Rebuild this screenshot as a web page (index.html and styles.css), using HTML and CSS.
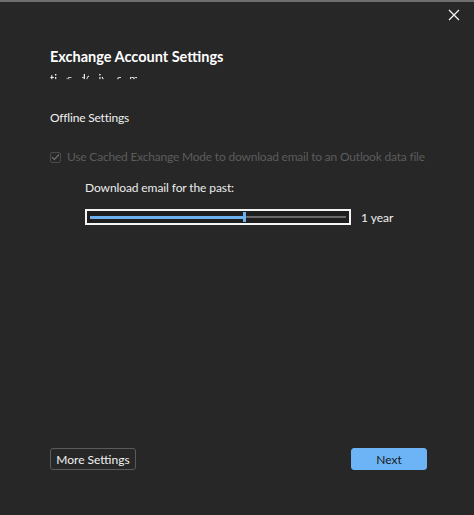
FILE: index.html
```html
<!DOCTYPE html>
<html>
<head>
<meta charset="utf-8">
<link rel="stylesheet" href="styles.css">
</head>
<body>
<div class="dialog">
  <div class="topline"></div>
  <div class="titlebar">
    <svg class="close" width="12" height="12" viewBox="0 0 12 12"><path d="M1 1 L11 11 M11 1 L1 11" stroke="#f2f2f2" stroke-width="1.3" fill="none"/></svg>
  </div>
  <div class="content">
    <h1 class="title">Exchange Account Settings</h1>
    <div class="email">tjmsnd@live.com</div>
    <div class="section">Offline Settings</div>
    <div class="check-row">
      <span class="checkbox"><svg width="9" height="8" viewBox="0 0 9 8"><path d="M1 4.2 L3.4 6.5 L8 1.5" stroke="#707070" stroke-width="1.2" fill="none"/></svg></span>
      <span class="check-label">Use Cached Exchange Mode to download email to an Outlook data file</span>
    </div>
    <div class="download">
      <div class="dl-label">Download email for the past:</div>
      <div class="slider-row">
        <div class="slider">
          <div class="track">
            <div class="fill" style="width: 60%"></div>
            <div class="thumb" style="left: 60%"></div>
          </div>
        </div>
        <span class="value">1 year</span>
      </div>
    </div>
  </div>
  <div class="footer">
    <button class="btn secondary">More Settings</button>
    <button class="btn primary">Next</button>
  </div>
</div>
</body>
</html>
```
FILE: styles.css
```css
html, body {
  margin: 0;
  padding: 0;
  background: #272727;
}
body {
  font-family: "Lato", "Noto Sans", sans-serif;
  color: #f0f0f0;
}
.dialog {
  width: 474px;
  height: 515px;
  display: flex;
  flex-direction: column;
  box-sizing: border-box;
}
.topline {
  height: 2px;
  background: #6e6e6e;
}
.titlebar {
  height: 34px;
  display: flex;
  justify-content: flex-end;
  align-items: flex-start;
}
.close {
  margin-top: 7px;
  margin-right: 14px;
}
.content {
  padding-left: 50px;
  flex: 1;
}
.title {
  margin: 11px 0 0 0;
  font-size: 14.5px;
  font-weight: 700;
  line-height: 20px;
  color: #ffffff;
}
.email {
  display: inline-block;
  margin-top: 2px;
  font-size: 12px;
  line-height: 14px;
  color: #ffffff;
  -webkit-mask-image: linear-gradient(to bottom, #000 0, #000 45%, transparent 55%), repeating-linear-gradient(to right, #000 0, #000 7px, transparent 7px, transparent 16px);
  -webkit-mask-composite: source-in;
  mask-image: linear-gradient(to bottom, #000 0, #000 45%, transparent 55%), repeating-linear-gradient(to right, #000 0, #000 7px, transparent 7px, transparent 16px);
  mask-composite: intersect;
}
.section {
  margin-top: 24px;
  font-size: 12px;
  letter-spacing: -0.2px;
  line-height: 16px;
  color: #f0f0f0;
}
.check-row {
  margin-top: 23px;
  display: flex;
  align-items: center;
  gap: 6px;
}
.checkbox {
  width: 11px;
  height: 11px;
  border: 1px solid #4a4a4a;
  border-radius: 2px;
  box-sizing: border-box;
  display: flex;
  align-items: center;
  justify-content: center;
}
.check-label {
  font-size: 12px;
  letter-spacing: -0.2px;
  line-height: 16px;
  color: #5c5c5c;
}
.download {
  padding-left: 35px;
}
.dl-label {
  margin-top: 15px;
  font-size: 12px;
  letter-spacing: -0.1px;
  line-height: 16px;
  color: #ececec;
}
.slider-row {
  margin-top: 13px;
  display: flex;
  align-items: center;
  gap: 10px;
}
.slider {
  width: 266px;
  height: 16px;
  border: 2px solid #f4f4f4;
  box-sizing: border-box;
  background: #1e1e1e;
  padding: 0 3px;
  display: flex;
  align-items: center;
}
.track {
  position: relative;
  flex: 1;
  height: 2px;
  background: #6a6a6a;
}
.fill {
  position: absolute;
  left: 0;
  top: -0.5px;
  height: 3px;
  background: #6cb0ee;
}
.thumb {
  position: absolute;
  top: -4px;
  width: 3px;
  height: 10px;
  background: #6cb0ee;
  margin-left: -1px;
}
.value {
  font-size: 12px;
  color: #f0f0f0;
}
.footer {
  display: flex;
  justify-content: space-between;
  padding: 0 47px 45px 50px;
}
.btn {
  font-family: "Lato", "Noto Sans", sans-serif;
  font-size: 12px;
  height: 22px;
  border-radius: 3px;
  padding: 0;
  box-sizing: border-box;
}
.secondary {
  width: 86px;
  background: #272727;
  border: 1px solid #5a5a5a;
  color: #f2f2f2;
}
.primary {
  width: 76px;
  background: #6cb4f6;
  border: 1px solid #6cb4f6;
  color: #1a1a1a;
}
```
